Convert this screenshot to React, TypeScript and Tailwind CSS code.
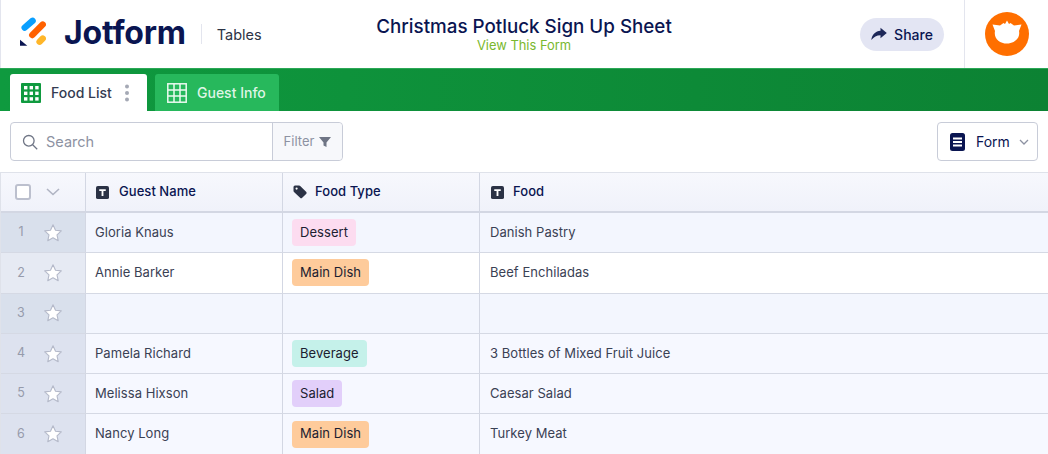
const font = "[font-family:Inter,'Liberation_Sans',sans-serif]";

function SolidGrid() {
  const xs = [3, 8.6, 14.2];
  const ys = [3, 8.6, 14.2];
  return (
    <svg viewBox="0 0 20 20" className="h-[20px] w-[20px] shrink-0">
      <rect width="20" height="20" rx="1" fill="#0f9a3f" />
      {xs.map((x) => ys.map((y) => <rect key={`${x}-${y}`} x={x} y={y} width="3.400" height="3.400" fill="#fff" />))}
    </svg>
  );
}

function LineGrid() {
  return (
    <svg viewBox="0 0 20 20" className="h-[20px] w-[20px] shrink-0" fill="none" stroke="#ecfaf0" strokeWidth="1.500">
      <rect x="0.800" y="0.800" width="18.400" height="18.400" />
      <path d="M0.800 7h18.400M0.800 13h18.400M7 0.800v18.400M13 0.800v18.400" />
    </svg>
  );
}

function TIcon() {
  return (
    <svg viewBox="0 0 14 14" className="h-[13px] w-[13px] shrink-0">
      <rect width="14" height="14" rx="2" fill="#2b3245" />
      <path d="M3.500 3.500h7v2H8v5.200H6V5.500H3.500z" fill="#fff" />
    </svg>
  );
}

function TagIcon() {
  return (
    <svg viewBox="0 0 14 14" className="h-[14px] w-[14px] shrink-0">
      <path d="M0.500 2A1.500 1.500 0 0 1 2 .5h4.200a1.500 1.500 0 0 1 1 .45l5.900 5.900a1.500 1.500 0 0 1 0 2.100l-3.900 3.900a1.500 1.500 0 0 1-2.100 0L1 6.900a1.500 1.500 0 0 1-.5-1z" fill="#2b3245" />
      <circle cx="3.600" cy="3.600" r="1.100" fill="#fff" />
    </svg>
  );
}

function Star() {
  return (
    <svg viewBox="0 0 20 20" className="h-[20px] w-[20px]">
      <path d="M10 1.800l2.500 5.400 5.800.7-4.300 4 1.200 5.800L10 14.800l-5.200 2.900L6 11.900l-4.300-4 5.800-.7z" fill="#fff" stroke="#b4b9c9" strokeWidth="1.100" strokeLinejoin="round" />
    </svg>
  );
}

const rows = [
  { n: 1, name: "Gloria Knaus", tag: "Dessert", color: "bg-[#fcdcf0]", food: "Danish Pastry", bg: "bg-[#f3f6fe]", side: "bg-[#d9e0ec]" },
  { n: 2, name: "Annie Barker", tag: "Main Dish", color: "bg-[#fecb9b]", food: "Beef Enchiladas", bg: "bg-white", side: "bg-[#e6eaf3]" },
  { n: 3, name: "", tag: "", color: "", food: "", bg: "bg-[#f3f6fe]", side: "bg-[#d9e0ec]" },
  { n: 4, name: "Pamela Richard", tag: "Beverage", color: "bg-[#c5f1ea]", food: "3 Bottles of Mixed Fruit Juice", bg: "bg-[#f6f8ff]", side: "bg-[#dde2ef]" },
  { n: 5, name: "Melissa Hixson", tag: "Salad", color: "bg-[#e2cffa]", food: "Caesar Salad", bg: "bg-[#f6f8ff]", side: "bg-[#dde2ef]" },
  { n: 6, name: "Nancy Long", tag: "Main Dish", color: "bg-[#fecb9b]", food: "Turkey Meat", bg: "bg-[#f6f8ff]", side: "bg-[#dde2ef]" },
];

export default function App() {
  return (
    <div className={`flex h-[454px] w-[1048px] flex-col overflow-hidden bg-white ${font}`}>
      <header className="flex h-[68px] shrink-0 items-center border-l border-[#e3e5ee]">
        <div className="flex w-[339px] shrink-0 items-center pl-[19px]">
          <div className="mb-[6px] flex items-center">
            <svg viewBox="0 0 26 30" className="h-[30px] w-[26px] shrink-0" fill="none" strokeLinecap="round" strokeWidth="6.400">
              <path d="M4.700 11.600L12.600 4.800" stroke="#0a9fff" />
              <path d="M12.300 19L22.700 8.600" stroke="#ff6100" />
              <path d="M19.600 25.700L22.700 22.600" stroke="#ffb629" />
              <path d="M0 23.700L7.300 29.700H0z" fill="#0a1551" />
            </svg>
            <span className="mt-[3px] ml-[18px] text-[32px] leading-none font-bold tracking-[-0.2px] text-[#0a1551]">Jotform</span>
          </div>
          <span className="ml-[15px] h-[20px] w-px bg-[#e3e5ee]" />
          <span className="mt-[2px] ml-[15px] text-[14.500px] text-[#2c3345]">Tables</span>
        </div>
        <div className="flex flex-1 flex-col items-center pb-[1px]">
          <div className="text-[18.800px] leading-[24px] font-medium text-[#0a1551]">Christmas Potluck Sign Up Sheet</div>
          <div className="text-[12.900px] leading-[14px] text-[#7ab82e]">View This Form</div>
        </div>
        <div className="flex w-[340px] shrink-0 items-center justify-end self-stretch">
          <div className="mr-[20px] flex h-[33px] w-[84px] items-center justify-center gap-[7px] rounded-full bg-[#e3e5f3] text-[14px] font-medium text-[#0a1551]">
            <svg viewBox="0 0 16 14" className="h-[14px] w-[16px]">
              <path d="M9.500 .8l6.300 5.200-6.300 5.200V8.200C5.500 8.200 3 9.700.3 13 1 7.700 4.500 4.200 9.500 3.800z" fill="#1d2758" />
            </svg>
            Share
          </div>
          <div className="flex h-full w-[84px] items-center justify-center border-l border-[#e3e5ee]">
            <svg viewBox="0 0 44 44" className="h-[44px] w-[44px]">
              <circle cx="22" cy="22" r="22" fill="#ff6f00" />
              <path d="M7.500 12.500L15 13.500 18.500 11 20 12 22 8.500 24 12 25.500 11 29 13.500 36.500 12.500 34 19C35.500 26 29.500 31.500 22 31.500S8.500 26 10 19z" fill="#fff" />
            </svg>
          </div>
        </div>
      </header>

      <nav className="flex h-[43px] shrink-0 items-end gap-[8px] border-t border-[#2aa856] bg-gradient-to-r from-[#0f9a3f] to-[#0c8233] pl-[10px]">
        <div className="flex h-[37px] w-[137px] items-center rounded-t-[3px] bg-white pl-[11px] text-[14px] font-medium text-[#343c52]">
          <SolidGrid />
          <span className="ml-[10px]">Food List</span>
          <svg viewBox="0 0 4 18" className="ml-[13px] h-[18px] w-[4px]" fill="#a5a9b5">
            <circle cx="2" cy="2.500" r="2" /><circle cx="2" cy="9" r="2" /><circle cx="2" cy="15.500" r="2" />
          </svg>
        </div>
        <div className="flex h-[37px] w-[124px] items-center rounded-t-[3px] bg-[#27b85c] pl-[12px] text-[14px] font-medium text-[#dff5e6]">
          <LineGrid />
          <span className="ml-[10px]">Guest Info</span>
        </div>
      </nav>

      <div className="flex h-[61px] shrink-0 items-center justify-between px-[10px]">
        <div className="flex h-[39px] w-[333px] items-stretch rounded-[4px] border border-[#c8ccd8]">
          <div className="flex flex-1 items-center pl-[11px] text-[14.500px] text-[#8d92a2]">
            <svg viewBox="0 0 16 16" className="h-[16px] w-[16px]" fill="none" stroke="#6f7585" strokeWidth="1.300">
              <circle cx="6.800" cy="6.800" r="5.300" /><path d="M10.700 10.700l4.500 4.500" />
            </svg>
            <span className="ml-[8px]">Search</span>
          </div>
          <div className="flex w-[70px] items-center justify-center gap-[5px] rounded-r-[4px] border-l border-[#c8ccd8] bg-[#f7f8fb] text-[13px] text-[#8d92a2]">
            Filter
            <svg viewBox="0 0 12 12" className="h-[12px] w-[12px]"><path d="M0 1h12L7.500 6.500V11l-3-1.500v-3z" fill="#6f7585" /></svg>
          </div>
        </div>
        <div className="flex h-[39px] w-[101px] items-center rounded-[4px] border border-[#c8ccd8] pl-[12px] text-[14px] text-[#0a1551]">
          <svg viewBox="0 0 15 18" className="h-[18px] w-[15px]">
            <rect width="15" height="18" rx="2.500" fill="#0a1551" />
            <path d="M3 5.500h9M3 9h9M3 12.500h9" stroke="#fff" strokeWidth="1.800" />
          </svg>
          <span className="ml-[11px]">Form</span>
          <svg viewBox="0 0 10 6" className="ml-[9px] h-[6px] w-[10px]" fill="none" stroke="#8d92a2" strokeWidth="1.300"><path d="M1 1l4 4 4-4" /></svg>
        </div>
      </div>

      <div className="flex-1 border-t border-l border-[#dfe2ea] text-[13px] tracking-[0.05px]">
        <div className="flex h-[40px] border-b-2 border-[#d3d7e3] bg-gradient-to-b from-[#f7f8fd] to-[#f0f2fa] font-medium text-[#0a1551]">
          <div className="flex w-[85px] shrink-0 items-center border-r border-[#d3d7e3] pl-[14px]">
            <span className="h-[16px] w-[16px] rounded-[3px] border-2 border-[#bcc0ce] bg-white" />
            <svg viewBox="0 0 14 8" className="ml-[15px] h-[8px] w-[14px]" fill="none" stroke="#b0b4c3" strokeWidth="1.600"><path d="M1 1l6 5.500L13 1" /></svg>
          </div>
          <div className="flex w-[197px] shrink-0 items-center gap-[10px] border-r border-[#d3d7e3] pl-[10px]"><TIcon />Guest Name</div>
          <div className="flex w-[197px] shrink-0 items-center gap-[8px] border-r border-[#d3d7e3] pl-[10px]"><TagIcon />Food Type</div>
          <div className="flex flex-1 items-center gap-[9px] pl-[11px]"><TIcon />Food</div>
        </div>
        {rows.map((r) => (
          <div key={r.n} className={`flex h-[40.300px] border-b border-[#d5d9e4] text-[#3a4154] ${r.bg}`}>
            <div className={`flex w-[85px] shrink-0 items-center border-r border-[#d3d7e3] pl-[16px] text-[#969bab] ${r.side}`}>
              <span className="w-[8px] text-center text-[12.500px]">{r.n}</span>
              <span className="ml-[18px]"><Star /></span>
            </div>
            <div className="flex w-[197px] shrink-0 items-center border-r border-[#d3d7e3] pl-[9px]">{r.name}</div>
            <div className="flex w-[197px] shrink-0 items-center border-r border-[#d3d7e3] pl-[9px]">
              {r.tag && <span className={`flex h-[27px] items-center rounded-[4px] px-[8px] text-[#1b2030] ${r.color}`}>{r.tag}</span>}
            </div>
            <div className="flex flex-1 items-center pl-[10px]">{r.food}</div>
          </div>
        ))}
      </div>
    </div>
  );
}
